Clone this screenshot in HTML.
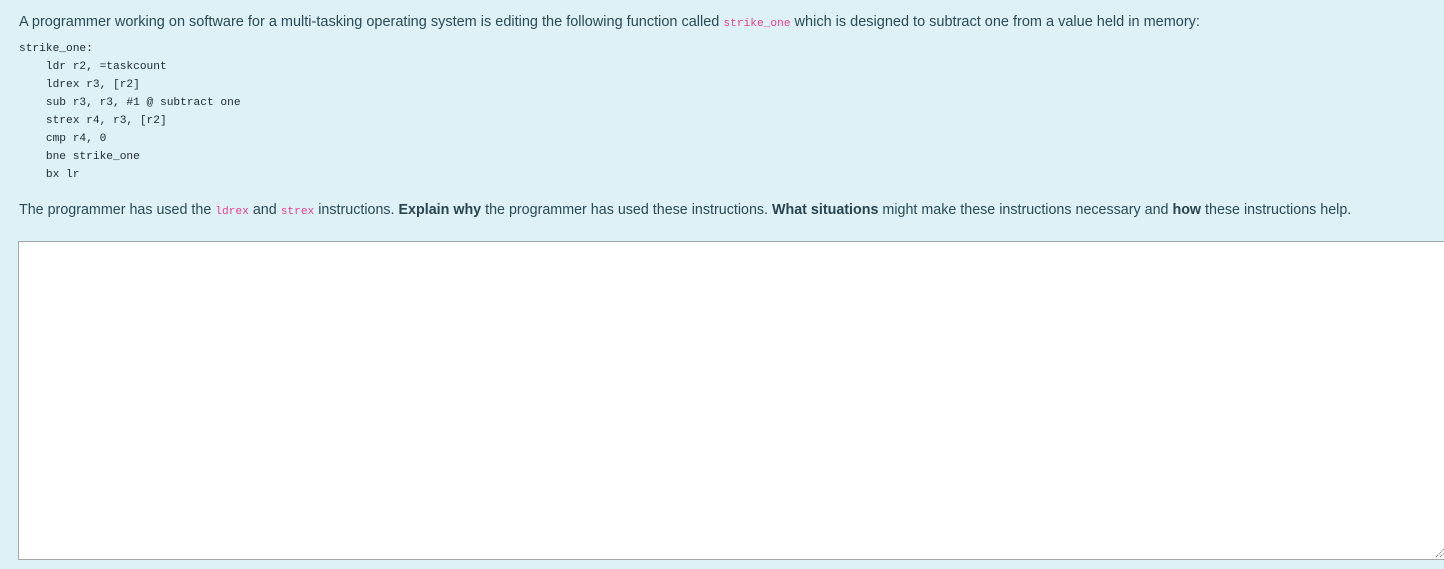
<!DOCTYPE html>
<html><head><style>
html,body{margin:0;padding:0;}
body{width:1444px;height:569px;background:#def1f7;color:#2b4a55;font-family:"Liberation Sans",sans-serif;font-size:14.4px;position:relative;overflow:hidden;}
.p1{position:absolute;left:19px;top:14px;white-space:nowrap;font-size:14.5px;}
.p2{position:absolute;left:19px;top:202px;white-space:nowrap;font-size:14.3px;}
code{font-family:"Liberation Mono",monospace;font-size:11.2px;color:#e83e8c;}
pre{position:absolute;left:19px;top:40px;margin:0;font-family:"Liberation Mono",monospace;font-size:11.2px;line-height:18px;color:#1c2a30;}
b{color:#2a4450;}
.ta{position:absolute;left:18px;top:241px;width:1440px;height:319px;background:#fff;border:1px solid #a8a8a8;box-sizing:border-box;}
.grip{position:absolute;left:1432px;top:548px;}
</style></head><body>
<div class="p1">A programmer working on software for a multi-tasking operating system is editing the following function called <code>strike_one</code> which is designed to subtract one from a value held in memory:</div>
<pre>strike_one:
    ldr r2, =taskcount
    ldrex r3, [r2]
    sub r3, r3, #1 @ subtract one
    strex r4, r3, [r2]
    cmp r4, 0
    bne strike_one
    bx lr</pre>
<div class="p2">The programmer has used the <code>ldrex</code> and <code>strex</code> instructions. <b>Explain why</b> the programmer has used these instructions. <b>What situations</b> might make these instructions necessary and <b>how</b> these instructions help.</div>
<div class="ta"></div>
<svg class="grip" width="12" height="10"><path d="M4 9L12 1M8 9L12 5" stroke="#666" stroke-width="1" stroke-dasharray="1 1"/></svg>
</body></html>
